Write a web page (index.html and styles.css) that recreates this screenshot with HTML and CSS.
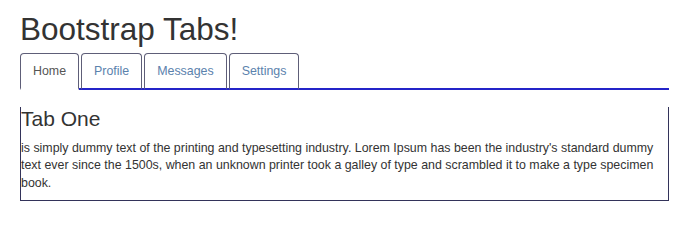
FILE: index.html
```html
<!DOCTYPE html>
<html lang="en">
<head>
  <meta charset="UTF-8">
  <meta name="viewport" content="width=device-width, initial-scale=1.0">
  <title>Bootstrap Tabs</title>
  <link rel="stylesheet" href="styles.css">
</head>
<body>
  <div class="container">
    <h1>Bootstrap Tabs!</h1>
    <ul class="nav-tabs">
      <li class="active"><a href="#home">Home</a></li>
      <li><a href="#profile">Profile</a></li>
      <li><a href="#messages">Messages</a></li>
      <li><a href="#settings">Settings</a></li>
    </ul>
    <div class="tab-content">
      <div class="tab-pane">
        <h3>Tab One</h3>
        <p>is simply dummy text of the printing and typesetting industry. Lorem Ipsum has been the industry's standard dummy text ever since the 1500s, when an unknown printer took a galley of type and scrambled it to make a type specimen book.</p>
      </div>
    </div>
  </div>
</body>
</html>
```

FILE: styles.css
```css
body {
  font-family: 'Liberation Sans', Arial, sans-serif;
  font-size: 12.4px;
  line-height: 1.45;
  margin: 0;
  color: #333;
  background-color: #fff;
}
.container {
  width: 649px;
  padding: 0 0 0 20px;
}
h1 {
  font-size: 31.5px;
  font-weight: normal;
  line-height: 1.1;
  margin: 12px 0 6px;
  color: #333;
}
.nav-tabs {
  list-style: none;
  margin: 0;
  padding: 0;
  display: flex;
  border-bottom: 2px solid #2424c8;
}
.nav-tabs li {
  margin-right: 2px;
  margin-bottom: -2px;
}
.nav-tabs a {
  display: block;
  padding: 9px 12px 8px;
  line-height: 17px;
  text-decoration: none;
  color: #5b82ad;
  border: 1px solid #5e5e78;
  border-bottom: 2px solid #2424c8;
  border-radius: 4px 4px 0 0;
}
.nav-tabs li.active a {
  color: #555;
  border-color: #5e5e78;
  border-bottom-color: #fff;
}
.tab-content {
  border: 1px solid #33335a;
  border-top: none;
  padding-bottom: 8px;
}
.tab-pane h3 {
  font-size: 21px;
  font-weight: normal;
  line-height: 1.1;
  margin: 17px 0 10px;
}
.tab-pane p {
  margin: 0;
  line-height: 17.5px;
}
```
